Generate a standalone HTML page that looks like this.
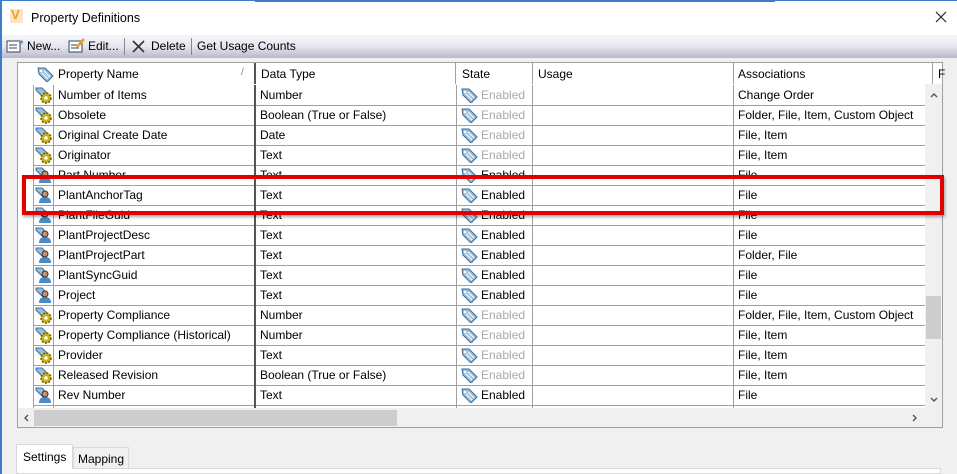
<!DOCTYPE html>
<html><head><style>
*{margin:0;padding:0;box-sizing:border-box}
body{width:957px;height:474px;overflow:hidden;background:#f0f0f0;font-family:"Liberation Sans",sans-serif;font-size:12px;color:#000;position:relative}
.a{position:absolute}
.t{position:absolute;white-space:nowrap;line-height:20px}
.dis{color:#a8a8b0}
.hl{position:absolute;left:33px;width:892px;height:1px;background:#a0a0a0}
.vl{position:absolute;width:1px;background:#a0a0a0}
</style></head><body>
<div class="a" style="left:0;top:0;width:3px;height:474px;background:#3c7fc8"></div>
<div class="a" style="left:2px;top:0;width:955px;height:474px;background:#f0f0f0;border-top:1px solid #3c7fc8"></div>
<div class="a" style="left:2px;top:1px;width:955px;height:34px;background:#fff"></div>
<div class="a" style="left:255px;top:0;width:520px;height:2px;background:#3c7fc8"></div>
<div class="a" style="left:10px;top:9px;width:13px;height:14px;background:#fbe4c8"></div>
<div class="t" style="left:11px;top:5px;color:#e8a020;font-weight:bold;font-size:13px">V</div>
<div class="t" style="left:31px;top:8px;font-size:12.5px">Property Definitions</div>
<svg class="a" style="left:935px;top:11px" width="12" height="12"><path d="M1 1L11 11M11 1L1 11" stroke="#222" stroke-width="1.2"/></svg>
<div class="a" style="left:2px;top:35px;width:955px;height:23px;background:linear-gradient(#f6f6fa,#e6e6ee 50%,#b8b8cc)"></div>
<svg class="a" style="left:6px;top:38px" width="18" height="16"><rect x="1" y="3" width="13" height="11" fill="#fff" stroke="#345"/><line x1="3" y1="7" x2="11" y2="7" stroke="#345"/><line x1="3" y1="10" x2="11" y2="10" stroke="#345"/><text x="12" y="7" font-size="8" fill="#48c">✶</text></svg>
<div class="t" style="left:27px;top:36px">New...</div>
<svg class="a" style="left:68px;top:38px" width="18" height="16"><rect x="1" y="3" width="13" height="11" fill="#fff" stroke="#345"/><line x1="3" y1="7" x2="9" y2="7" stroke="#345"/><line x1="3" y1="10" x2="11" y2="10" stroke="#345"/><line x1="9" y1="9" x2="16" y2="1" stroke="#e0a020" stroke-width="2.5"/></svg>
<div class="t" style="left:88px;top:36px">Edit...</div>
<div class="a" style="left:124px;top:38px;width:1px;height:17px;background:#888"></div>
<svg class="a" style="left:132px;top:40px" width="13" height="13"><path d="M1 1L12 12M12 1L1 12" stroke="#333" stroke-width="1.6"/></svg>
<div class="t" style="left:151px;top:36px">Delete</div>
<div class="a" style="left:191px;top:38px;width:1px;height:17px;background:#888"></div>
<div class="t" style="left:197px;top:36px">Get Usage Counts</div>

<div class="a" style="left:17px;top:62px;width:926px;height:366px;background:#fff;border:1px solid #a0a0a0"></div>
<div class="a" style="left:18px;top:63px;width:15px;height:345px;background:#fff"></div>
<div id="g"></div>
<div class="a" style="left:925px;top:84px;width:17px;height:324px;background:#f0f0f0"></div>
<div class="a" style="left:926px;top:296px;width:15px;height:43px;background:#cdcdcd"></div>
<svg class="a" style="left:930px;top:92px" width="8" height="6"><path d="M1 5L4 2L7 5" stroke="#555" fill="none" stroke-width="1.4"/></svg>
<svg class="a" style="left:930px;top:397px" width="8" height="6"><path d="M1 1L4 4L7 1" stroke="#555" fill="none" stroke-width="1.4"/></svg>
<div class="a" style="left:18px;top:408px;width:924px;height:19px;background:#f0f0f0"></div>
<div class="a" style="left:34px;top:410px;width:363px;height:16px;background:#cdcdcd"></div>
<svg class="a" style="left:23px;top:414px" width="6" height="8"><path d="M5 1L2 4L5 7" stroke="#555" fill="none" stroke-width="1.4"/></svg>
<svg class="a" style="left:912px;top:414px" width="6" height="8"><path d="M1 1L4 4L1 7" stroke="#555" fill="none" stroke-width="1.4"/></svg>

<div class="a" style="left:22px;top:175px;width:922px;height:40px;border:4px solid #e00000;box-shadow:1px 2px 3px rgba(0,0,0,.35)"></div>

<div class="a" style="left:16px;top:468px;width:925px;height:6px;background:#fff;border:1px solid #d8d8d8"></div>
<div class="a" style="left:16px;top:444px;width:57px;height:25px;background:#fff;border:1px solid #d8d8d8;border-bottom:none"></div>
<div class="t" style="left:23px;top:447px">Settings</div>
<div class="a" style="left:73px;top:447px;width:56px;height:21px;border:1px solid #d8d8d8;border-bottom:none"></div>
<div class="t" style="left:78px;top:449px">Mapping</div>

<script>
var rows=[
["Number of Items","Number",0,"Change Order",0],
["Obsolete","Boolean (True or False)",0,"Folder, File, Item, Custom Object",0],
["Original Create Date","Date",0,"File, Item",0],
["Originator","Text",0,"File, Item",0],
["Part Number","Text",1,"File",1],
["PlantAnchorTag","Text",1,"File",1],
["PlantFileGuid","Text",1,"File",1],
["PlantProjectDesc","Text",1,"File",1],
["PlantProjectPart","Text",1,"Folder, File",1],
["PlantSyncGuid","Text",1,"File",1],
["Project","Text",1,"File",1],
["Property Compliance","Number",0,"Folder, File, Item, Custom Object",0],
["Property Compliance (Historical)","Number",0,"File, Item",0],
["Provider","Text",0,"File, Item",0],
["Released Revision","Boolean (True or False)",0,"File, Item",0],
["Rev Number","Text",1,"File",1]];
var h='';
function tag(x,y){return '<svg class="a" style="left:'+x+'px;top:'+y+'px" width="18" height="16"><path d="M2 2h7l8 8-6 6-8-8z" fill="#9cc0dc" stroke="#3d6b95"/><path d="M6 7l6 6M8 5l6 6" stroke="#fff"/><circle cx="5" cy="5" r="1.3" fill="#fff"/></svg>';}
function gear(x,y){return '<svg class="a" style="left:'+x+'px;top:'+y+'px" width="18" height="17"><path d="M1 1h6l5 5-4 4-7-7z" fill="#9cc0dc" stroke="#3d6b95"/><circle cx="11" cy="11" r="5" fill="#c8b018" stroke="#6a5a00" stroke-width="1.5" stroke-dasharray="2 1.4"/><circle cx="11" cy="11" r="1.8" fill="#fff"/></svg>';}
function user(x,y){return '<svg class="a" style="left:'+x+'px;top:'+y+'px" width="18" height="17"><path d="M1 1h6l5 5-4 4-7-7z" fill="#9cc0dc" stroke="#3d6b95"/><path d="M4 16c0-5 3-6 6-6s6 1 6 6z" fill="#4a8ac8"/><circle cx="10" cy="7" r="3" fill="#c89070" stroke="#333"/></svg>';}
h+=tag(36,66);
h+='<div class="t" style="left:58px;top:64px">Property Name</div><div class="t" style="left:241px;top:63px;color:#888;font-size:10px">/</div>';
h+='<div class="t" style="left:261px;top:64px">Data Type</div><div class="t" style="left:462px;top:64px">State</div><div class="t" style="left:538px;top:64px">Usage</div><div class="t" style="left:738px;top:64px">Associations</div><div class="t" style="left:938px;top:64px">F</div>';
h+='<div class="vl" style="left:455px;top:63px;height:21px"></div><div class="vl" style="left:532px;top:63px;height:21px"></div><div class="vl" style="left:733px;top:63px;height:21px"></div><div class="vl" style="left:932px;top:63px;height:21px"></div>';
for(var i=0;i<rows.length;i++){var r=rows[i],y=85+i*20;
h+=(r[4]?user(35,y+2):gear(35,y+2));
h+='<div class="t" style="left:58px;top:'+y+'px">'+r[0]+'</div>';
h+='<div class="t" style="left:260px;top:'+y+'px">'+r[1]+'</div>';
h+=tag(460,y+2);
h+='<div class="t '+(r[2]?'':'dis')+'" style="left:481px;top:'+y+'px">Enabled</div>';
h+='<div class="t" style="left:738px;top:'+y+'px">'+r[3]+'</div>';
h+='<div class="hl" style="top:'+(y+20)+'px"></div>';}
h+='<div class="vl" style="left:33px;top:84px;height:324px"></div>';
h+='<div class="vl" style="left:53px;top:84px;height:324px"></div>';
h+='<div class="a" style="left:254px;top:63px;width:2px;height:345px;background:#555"></div>';
h+='<div class="vl" style="left:456px;top:84px;height:324px"></div>';
h+='<div class="vl" style="left:532px;top:84px;height:324px"></div>';
h+='<div class="vl" style="left:733px;top:84px;height:324px"></div>';
h+='<div class="a" style="left:18px;top:84px;width:907px;height:1px;background:#fff"></div>';
document.getElementById('g').innerHTML=h;
</script>
</body></html>
